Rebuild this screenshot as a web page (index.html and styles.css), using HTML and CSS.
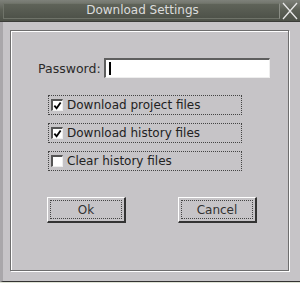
FILE: index.html
```html
<!DOCTYPE html>
<html>
<head>
<meta charset="utf-8">
<link rel="stylesheet" href="styles.css">
</head>
<body>
<div class="window">
  <div class="titlebar">
    <div class="title-panel"><span class="title">Download Settings</span></div>
    <div class="close">
      <svg width="16" height="18" viewBox="0 0 16 18"><path d="M1 1 L15 17 M15 1 L1 17" stroke="#e8e8e8" stroke-width="1.3" fill="none"/></svg>
    </div>
  </div>
  <div class="frame">
    <div class="group">
      <div class="pw-row">
        <label class="pw-label">Password:</label>
        <div class="input"><span class="caret"></span></div>
      </div>
      <div class="checks">
        <div class="check-row"><span class="box checked"><svg width="10" height="10" viewBox="0 0 10 10"><path d="M1.5 4.5 L4 7.5 L8.5 1" stroke="#000" stroke-width="2" fill="none"/></svg></span><span>Download project files</span></div>
        <div class="check-row"><span class="box checked"><svg width="10" height="10" viewBox="0 0 10 10"><path d="M1.5 4.5 L4 7.5 L8.5 1" stroke="#000" stroke-width="2" fill="none"/></svg></span><span>Download history files</span></div>
        <div class="check-row"><span class="box"></span><span>Clear history files</span></div>
      </div>
      <div class="buttons">
        <div class="btn"><div class="btn-inner">Ok</div></div>
        <div class="btn"><div class="btn-inner">Cancel</div></div>
      </div>
    </div>
  </div>
</div>
</body>
</html>
```
FILE: styles.css
```css
html, body {
  margin: 0;
  padding: 0;
  background: #c6c4c7;
}
.window {
  width: 300px;
  height: 283px;
  display: flex;
  flex-direction: column;
  font-family: "DejaVu Sans", sans-serif;
  font-size: 12px;
  color: #222;
  background: #c6c4c7;
  box-sizing: border-box;
  border-bottom: 1px solid #dfe3d6;
}
.titlebar {
  height: 22px;
  display: flex;
  background: linear-gradient(#7e817a, #5d6157 45%, #4d5148);
  border-bottom: 1px solid #3a3c38;
  box-sizing: border-box;
}
.title-panel {
  flex: 1;
  margin: 3px 0 2px 3px;
  border: 1px solid #6f7369;
  border-right-color: #8a8d85;
  display: flex;
  align-items: center;
  justify-content: center;
  background: linear-gradient(#5f6359, #4e5249);
}
.title {
  color: #dcdcdc;
  font-size: 12px;
  position: relative;
  top: -1px;
  left: 1px;
}
.close {
  width: 20px;
  display: flex;
  align-items: center;
  justify-content: center;
}
.frame {
  flex: 1;
  padding: 8px 11px 10px 7px;
  border-left: 3px solid #a9a7aa;
  border-bottom: 1px solid #333;
  box-sizing: border-box;
  display: flex;
}
.group {
  flex: 1;
  border: 1px solid #6e6e6e;
  box-shadow: 1px 1px 0 #fff, inset 1px 1px 0 #fff;
  display: flex;
  flex-direction: column;
  padding-left: 26px;
}
.pw-row {
  display: flex;
  align-items: center;
  margin-top: 27px;
  margin-left: 1px;
}
.pw-label {
  font-size: 12.5px;
  color: #2a2a2a;
  margin-right: 5px;
  width: 61px;
  white-space: nowrap;
}
.input {
  width: 163px;
  height: 17px;
  background: #fff;
  border-top: 2px solid #5e5e5e;
  border-left: 2px solid #5e5e5e;
  border-right: 1px solid #eee;
  border-bottom: 1px solid #eee;
  display: flex;
  align-items: center;
}
.caret {
  width: 2px;
  height: 13px;
  background: #000;
  margin-left: 3px;
}
.checks {
  display: flex;
  flex-direction: column;
  gap: 8px;
  margin-top: 17px;
  margin-left: 11px;
}
.check-row {
  width: 194px;
  height: 20px;
  box-sizing: border-box;
  border: 1px dotted #444;
  display: flex;
  align-items: center;
  font-size: 12px;
  color: #222;
}
.box {
  width: 12px;
  height: 12px;
  box-sizing: border-box;
  background: #fff;
  border-top: 2px solid #555;
  border-left: 2px solid #555;
  border-right: 1px solid #eee;
  border-bottom: 1px solid #eee;
  margin: 0 4px 0 2px;
  display: flex;
  align-items: center;
  justify-content: center;
}
.buttons {
  display: flex;
  gap: 52px;
  margin-top: 26px;
  margin-left: 10px;
}
.btn {
  width: 79px;
  height: 26px;
  box-sizing: border-box;
  border-top: 1px solid #fff;
  border-left: 1px solid #fff;
  border-right: 2px solid #333;
  border-bottom: 2px solid #333;
  background: #c6c4c7;
  padding: 2px;
  display: flex;
}
.btn-inner {
  flex: 1;
  border: 1px dotted #444;
  display: flex;
  align-items: center;
  justify-content: center;
  font-size: 12px;
  color: #333;
}
```
